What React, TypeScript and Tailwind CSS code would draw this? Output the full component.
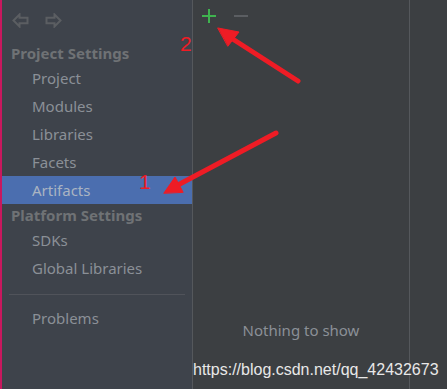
import React from "react";

const projectItems = ["Project", "Modules", "Libraries", "Facets"];
const platformItems = ["SDKs", "Global Libraries"];

function NavArrow({ flip }: { flip?: boolean }) {
  return (
    <svg
      width="17"
      height="15"
      viewBox="0 0 17 15"
      className={flip ? "-scale-x-100" : ""}
    >
      <path
        d="M1.5 7.5 L7.5 1.5 L7.5 4.8 L15.5 4.8 L15.5 10.2 L7.5 10.2 L7.5 13.5 Z"
        fill="none"
        stroke="#5b5e62"
        strokeWidth="2"
        strokeLinejoin="miter"
      />
    </svg>
  );
}

function Row({ label, selected }: { label: string; selected?: boolean }) {
  return (
    <div
      className={
        "flex h-[28px] items-center pl-[30px] text-[15px] " +
        (selected ? "bg-[#4b6eaf] text-[#aab4c2]" : "text-[#8b9097]")
      }
    >
      {label}
    </div>
  );
}

function Heading({ label }: { label: string }) {
  return (
    <div className="flex h-[21px] items-center pl-[9px] text-[15px] font-bold text-[#6f7275]">
      {label}
    </div>
  );
}

export default function App() {
  return (
    <div
      className="relative flex h-[389px] w-[447px] overflow-hidden bg-[#3c3f42]"
      style={{ fontFamily: '"Noto Sans", "Open Sans", sans-serif' }}
    >
      <aside className="flex w-[193px] shrink-0 flex-col border-l-2 border-r border-l-[#c8185e] border-r-[#55585c] bg-[#3e434b]">
        <div className="flex h-[43px] items-center gap-[16px] pb-[3px] pl-[10px]">
          <NavArrow />
          <NavArrow flip />
        </div>
        <Heading label="Project Settings" />
        {projectItems.map((item) => (
          <Row key={item} label={item} />
        ))}
        <Row label="Artifacts" selected />
        <div className="pt-px">
          <Heading label="Platform Settings" />
        </div>
        {platformItems.map((item) => (
          <Row key={item} label={item} />
        ))}
        <div className="mx-[7px] mb-[9px] mt-[12px] h-px bg-[#50535a]" />
        <Row label="Problems" />
      </aside>

      <section className="flex w-[217px] shrink-0 flex-col border-r border-[#55585c]">
        <div className="flex h-[32px] items-center gap-[16px] pl-[8px]">
          <svg width="16" height="16" viewBox="0 0 16 16">
            <path d="M8 1 V15 M1 8 H15" stroke="#3fb34f" strokeWidth="2" />
          </svg>
          <svg width="16" height="16" viewBox="0 0 16 16">
            <path d="M1 8 H15" stroke="#5b5e62" strokeWidth="2" />
          </svg>
        </div>
        <div className="flex flex-1 items-end justify-center pb-[48px] text-[15px] text-[#8b9097]">
          Nothing to show
        </div>
      </section>

      <section className="flex-1" />

      <svg
        className="pointer-events-none absolute inset-0"
        width="447"
        height="389"
        viewBox="0 0 447 389"
      >
        <g stroke="#ee1c25" strokeWidth="5" strokeLinecap="round" fill="#ee1c25">
          <line x1="298" y1="81" x2="228" y2="36" />
          <polygon points="218,28 239,32 228,46" strokeWidth="1" />
          <line x1="276" y1="133" x2="176" y2="186" />
          <polygon points="164,193 175,177 183,192" strokeWidth="1" />
        </g>
        <text
          x="180"
          y="51"
          fill="#ee1c25"
          fontSize="21"
          fontFamily="Liberation Sans, sans-serif"
        >
          2
        </text>
        <text
          x="139"
          y="189"
          fill="#ee1c25"
          fontSize="21"
          fontFamily="Liberation Sans, sans-serif"
        >
          1
        </text>
      </svg>

      <div
        className="absolute left-[193px] top-[358px] text-[16px] text-[#e8e8e8]"
        style={{ fontFamily: '"Liberation Sans", Arial, sans-serif' }}
      >
        https://blog.csdn.net/qq_42432673
      </div>
    </div>
  );
}
